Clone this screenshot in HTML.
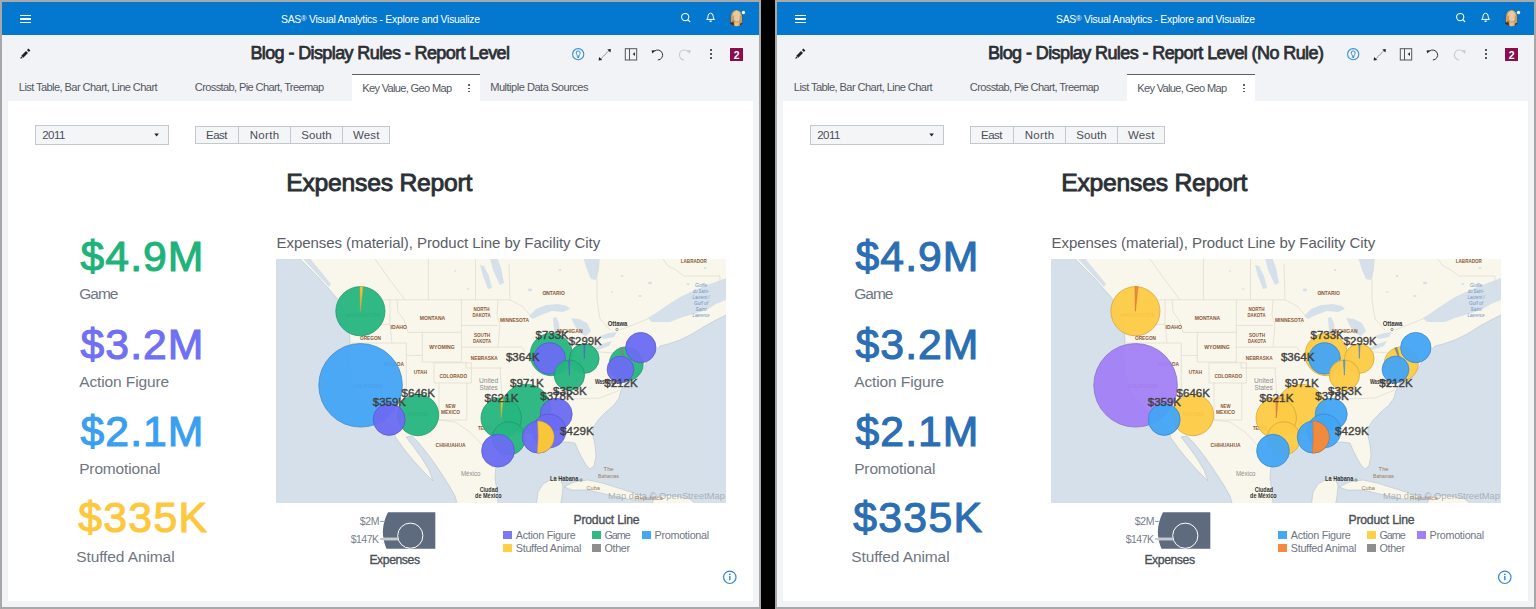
<!DOCTYPE html><html><head><meta charset="utf-8"><style>
html,body{margin:0;padding:0;width:1536px;height:609px;overflow:hidden;background:#a8a8a8}
.r{position:absolute}
.t{position:absolute;white-space:pre;font-family:'Liberation Sans', sans-serif;line-height:normal}
svg{position:absolute;overflow:visible}
</style></head><body>
<div class="r" style="left:761px;top:0;width:14px;height:609px;background:#000"></div>
<div class="r" style="left:2px;top:2px;width:757px;height:32.5px;background:#0478cf"></div>
<div class="r" style="left:2px;top:34.5px;width:757px;height:572.5px;background:#f2f3f6"></div>
<div class="r" style="left:20px;top:14.9px;width:10.5px;height:1.3px;background:#fff"></div>
<div class="r" style="left:20px;top:18.4px;width:10.5px;height:1.3px;background:#fff"></div>
<div class="r" style="left:20px;top:21.8px;width:10.5px;height:1.3px;background:#fff"></div>
<div class="t" style="left:281.00px;top:14.29px;font-size:10.4px;font-weight:400;color:#fff;letter-spacing:-0.255px;">SAS<span style="font-size:7.5px;position:relative;top:-2.6px">&#174;</span> Visual Analytics - Explore and Visualize</div>
<svg style="left:678px;top:10px" width="16" height="16" viewBox="0 0 16 16">
<circle cx="7.2" cy="7" r="3.6" fill="none" stroke="#fff" stroke-width="1.05"/>
<line x1="9.8" y1="9.7" x2="11.8" y2="11.6" stroke="#fff" stroke-width="1.2" stroke-linecap="round"/></svg>
<svg style="left:703px;top:10px" width="16" height="16" viewBox="0 0 16 16">
<path d="M3.6 9.4 Q5.2 8.4 5.0 6.2 Q5.1 3.3 7.6 3.2 Q10.1 3.3 10.2 6.2 Q10.0 8.4 11.6 9.4 Z" fill="none" stroke="#fff" stroke-width="1.0" stroke-linejoin="round"/>
<path d="M6.6 10.8 Q7.6 11.9 8.6 10.8" fill="none" stroke="#fff" stroke-width="1.3"/></svg>
<svg style="left:724px;top:6px" width="26" height="24" viewBox="0 0 26 24">
<defs><clipPath id="avc0"><circle cx="12.4" cy="12.1" r="8.2"/></clipPath></defs>
<circle cx="12.4" cy="12.1" r="8.2" fill="#1a6db5"/>
<g clip-path="url(#avc0)">
<path d="M7.2 19.5 Q6.6 12 7.4 8.2 Q9 4.2 12.6 4.1 Q16.4 4.3 17.6 8.4 Q18.4 12.5 17.6 19.8 Q12.5 22 7.2 19.5Z" fill="#c9a062"/><path d="M8.5 10 Q9.5 5 12.6 4.8 Q15.8 5 16.6 10 Q12.6 8 8.5 10Z" fill="#e6cf9c"/>
<ellipse cx="12.9" cy="11.6" rx="2.9" ry="4.1" fill="#e9c8a4"/>

<path d="M3.5 22 Q4.5 17 8.6 15.8 Q10.5 19 10.5 22Z" fill="#2a2a30"/><path d="M9 14 Q10.2 17 10 20 L8.6 20 Q8.2 16 9 14Z" fill="#5a4330"/>
<path d="M21.5 22 Q20.5 17.5 16.8 16.8 Q15.5 20 15.2 22Z" fill="#26262c"/>
<path d="M10.8 15.8 Q12.8 17.5 14.8 15.8 L14.4 21 L11.2 21Z" fill="#e4bf98"/>
</g>
<circle cx="19.5" cy="6.5" r="1.7" fill="#fff"/></svg>
<svg style="left:18px;top:47px" width="14" height="14" viewBox="0 0 14 14">
<path d="M2.3 11.7 L3.1 9.3 L4.7 10.9 Z" fill="#222"/>
<line x1="4.3" y1="9.7" x2="9.0" y2="5.0" stroke="#222" stroke-width="2.8"/>
<line x1="9.9" y1="4.1" x2="11.4" y2="2.6" stroke="#222" stroke-width="2.8" stroke-linecap="butt"/></svg>
<div class="t" style="left:250.40px;top:42.91px;font-size:18px;font-weight:400;color:#2c2f34;letter-spacing:-0.604px;-webkit-text-stroke:0.75px #2c2f34;">Blog - Display Rules - Report Level</div>
<svg style="left:571px;top:47px" width="15" height="15" viewBox="0 0 15 15">
<circle cx="7.2" cy="7.2" r="5.6" fill="none" stroke="#3a8fd7" stroke-width="1.1"/>
<path d="M5.3 6.3 A1.95 1.95 0 1 1 9.1 6.3 Q8.7 7.5 8.1 8.4 L8.1 9.3 L6.3 9.3 L6.3 8.4 Q5.7 7.5 5.3 6.3 Z" fill="none" stroke="#3a8fd7" stroke-width="1"/>
<rect x="6.3" y="9.6" width="1.8" height="1.4" fill="#3a8fd7"/></svg>
<svg style="left:597px;top:47px" width="16" height="16" viewBox="0 0 16 16">
<line x1="3.8" y1="11.8" x2="12" y2="3.6" stroke="#444" stroke-width="0.8" stroke-dasharray="1.6 0.6"/>
<path d="M1.6 13.4 L2.1 9.9 L5.2 13.0 Z" fill="#222"/>
<path d="M13.9 2.0 L13.4 5.5 L10.3 2.5 Z" fill="#222"/></svg>
<svg style="left:624px;top:48px" width="14" height="14" viewBox="0 0 14 14">
<rect x="1.3" y="0.7" width="11.4" height="11.3" fill="none" stroke="#555" stroke-width="1"/>
<line x1="5.5" y1="0.7" x2="5.5" y2="12" stroke="#555" stroke-width="1"/>
<path d="M11 4.3 L11 7.9 L8.6 6.1 Z" fill="#333"/></svg>
<svg style="left:650px;top:47px" width="16" height="16" viewBox="0 0 16 16">
<path d="M4.3 4.3 A5.0 5.0 0 1 1 7.8 13.0" fill="none" stroke="#333" stroke-width="1.0"/>
<path d="M1.6 3.6 L5.4 3.3 L2.3 6.6 Z" fill="#222"/></svg>
<svg style="left:676px;top:47px" width="16" height="16" viewBox="0 0 16 16">
<path d="M12.0 4.6 A5.0 5.0 0 1 0 8.2 13.0" fill="none" stroke="#c9cbcf" stroke-width="1.1"/>
<path d="M14.8 3.2 L10.4 3.0 L13.9 7.0 Z" fill="#c9cbcf"/></svg>
<div class="r" style="left:709.5px;top:48.9px;width:2.2px;height:2.2px;border-radius:50%;background:#222"></div>
<div class="r" style="left:709.5px;top:53.1px;width:2.2px;height:2.2px;border-radius:50%;background:#222"></div>
<div class="r" style="left:709.5px;top:57.1px;width:2.2px;height:2.2px;border-radius:50%;background:#222"></div>
<div class="r" style="left:730.3px;top:48.1px;width:12.6px;height:12.8px;background:#8b0d4b"></div>
<div class="t" style="left:733.68px;top:49.10px;font-size:10.5px;font-weight:700;color:#fff;letter-spacing:0.000px;">2</div>
<div class="t" style="left:18.80px;top:80.95px;font-size:11.1px;font-weight:400;color:#535861;letter-spacing:-0.589px;">List Table, Bar Chart, Line Chart</div>
<div class="t" style="left:194.80px;top:80.95px;font-size:11.1px;font-weight:400;color:#535861;letter-spacing:-0.639px;">Crosstab, Pie Chart, Treemap</div>
<div class="r" style="left:352px;top:74px;width:127.5px;height:27px;background:#fff;border-top:1.6px solid #5b5f66;box-sizing:border-box"></div>
<div class="t" style="left:362.30px;top:82.25px;font-size:11.1px;font-weight:400;color:#535861;letter-spacing:-0.691px;">Key Value, Geo Map</div>
<div class="r" style="left:468px;top:84.2px;width:1.6px;height:1.6px;border-radius:50%;background:#444"></div>
<div class="r" style="left:468px;top:87.5px;width:1.6px;height:1.6px;border-radius:50%;background:#444"></div>
<div class="r" style="left:468px;top:90.8px;width:1.6px;height:1.6px;border-radius:50%;background:#444"></div>
<div class="t" style="left:490.20px;top:80.75px;font-size:11.1px;font-weight:400;color:#535861;letter-spacing:-0.507px;">Multiple Data Sources</div>
<div class="r" style="left:8px;top:101px;width:744.5px;height:499.5px;background:#fff"></div>
<div class="r" style="left:35px;top:125px;width:134px;height:19.5px;background:#f4f5f7;border:1px solid #c3c7ce;box-sizing:border-box"></div>
<div class="t" style="left:42.30px;top:128.59px;font-size:11.5px;font-weight:400;color:#4a4f58;letter-spacing:-0.578px;">2011</div>
<svg style="left:152.5px;top:131px" width="8" height="8" viewBox="0 0 8 8"><path d="M1.3 2.4 L5.9 2.4 L3.6 5.6 Z" fill="#222"/></svg>
<div class="r" style="left:195.3px;top:126.4px;width:194.5px;height:17.3px;background:#f4f5f7;border:1px solid #c3c7ce;box-sizing:border-box"></div>
<div class="r" style="left:237.7px;top:126.4px;width:1px;height:17.3px;background:#c3c7ce"></div>
<div class="r" style="left:290.1px;top:126.4px;width:1px;height:17.3px;background:#c3c7ce"></div>
<div class="r" style="left:341.9px;top:126.4px;width:1px;height:17.3px;background:#c3c7ce"></div>
<div class="t" style="left:206.05px;top:128.59px;font-size:11.5px;font-weight:400;color:#4a4f58;letter-spacing:-0.505px;">East</div>
<div class="t" style="left:249.65px;top:128.59px;font-size:11.5px;font-weight:400;color:#4a4f58;letter-spacing:0.344px;">North</div>
<div class="t" style="left:301.25px;top:128.59px;font-size:11.5px;font-weight:400;color:#4a4f58;letter-spacing:0.109px;">South</div>
<div class="t" style="left:352.95px;top:128.59px;font-size:11.5px;font-weight:400;color:#4a4f58;letter-spacing:0.167px;">West</div>
<div class="t" style="left:286.30px;top:169.45px;font-size:24.7px;font-weight:400;color:#2b2f36;letter-spacing:-0.242px;-webkit-text-stroke:0.9px #2b2f36;">Expenses Report</div>
<div class="t" style="left:80.60px;top:232.16px;font-size:42.7px;font-weight:400;color:#1fb37b;letter-spacing:1.036px;-webkit-text-stroke:1.1px #1fb37b;">$4.9M</div>
<div class="t" style="left:79.20px;top:285.17px;font-size:15.5px;font-weight:400;color:#6f7682;letter-spacing:-0.973px;">Game</div>
<div class="t" style="left:80.60px;top:320.16px;font-size:42.7px;font-weight:400;color:#7070f3;letter-spacing:1.036px;-webkit-text-stroke:1.1px #7070f3;">$3.2M</div>
<div class="t" style="left:79.20px;top:372.97px;font-size:15.5px;font-weight:400;color:#6f7682;letter-spacing:-0.111px;">Action Figure</div>
<div class="t" style="left:80.60px;top:407.16px;font-size:42.7px;font-weight:400;color:#3a9ff1;letter-spacing:1.036px;-webkit-text-stroke:1.1px #3a9ff1;">$2.1M</div>
<div class="t" style="left:79.20px;top:459.87px;font-size:15.5px;font-weight:400;color:#6f7682;letter-spacing:-0.152px;">Promotional</div>
<div class="t" style="left:78.30px;top:493.36px;font-size:42.7px;font-weight:400;color:#fdc83e;letter-spacing:1.291px;-webkit-text-stroke:1.1px #fdc83e;">$335K</div>
<div class="t" style="left:76.20px;top:547.57px;font-size:15.5px;font-weight:400;color:#6f7682;letter-spacing:-0.098px;">Stuffed Animal</div>
<div class="t" style="left:276.60px;top:233.93px;font-size:15px;font-weight:400;color:#5b6068;letter-spacing:-0.065px;">Expenses (material), Product Line by Facility City</div>
<svg style="left:276px;top:259px" width="450" height="244" viewBox="0 0 450 244"><defs><clipPath id="mc276"><rect width="450" height="244"/></clipPath></defs><g clip-path="url(#mc276)">
<rect width="450" height="244" fill="#d6e0ea"/>
<polygon points="19.0,-5.0 24.0,0.0 34.0,10.0 42.0,18.0 52.0,29.0 60.0,38.0 66.0,46.0 70.0,57.0 73.0,69.0 74.0,81.0 73.0,96.0 74.0,111.0 77.0,126.0 84.0,139.0 94.0,149.0 106.0,159.0 116.0,169.0 120.0,179.0 128.0,190.0 137.0,201.0 146.0,211.0 154.0,219.0 157.0,222.0 153.0,211.0 145.0,198.0 137.0,187.0 130.0,178.0 136.0,177.0 143.0,184.0 151.0,194.0 159.0,205.0 167.0,217.0 174.0,228.0 179.0,237.0 181.0,244.0 182.0,249.0 222.0,249.0 222.0,244.0 221.0,233.0 219.0,219.0 220.0,206.0 222.0,196.0 227.0,188.0 236.0,183.0 249.0,181.0 264.0,183.0 279.0,184.0 292.0,183.0 299.0,184.0 302.0,191.0 306.0,199.0 310.0,206.0 314.0,210.0 318.0,207.0 320.0,197.0 319.0,186.0 317.0,177.0 317.0,169.0 322.0,161.0 330.0,153.0 338.0,146.0 343.0,139.0 345.0,131.0 350.0,123.0 358.0,116.0 367.0,110.0 372.0,101.0 378.0,93.0 384.0,87.0 392.0,85.0 404.0,81.0 416.0,75.0 429.0,67.0 440.0,61.0 450.0,56.0 455.0,54.0 455.0,-5.0" fill="#f9f7ec" stroke="#b9c3cc" stroke-width="0.6"/>
<polygon points="260.0,249.0 262.0,233.0 267.0,225.0 276.0,220.0 284.0,219.0 287.0,227.0 286.0,237.0 284.0,249.0" fill="#f9f7ec" stroke="#b9c3cc" stroke-width="0.6"/>
<polygon points="288.0,228.0 298.0,223.0 312.0,221.0 326.0,224.0 342.0,229.0 358.0,234.0 370.0,238.0 365.0,242.0 346.0,239.0 329.0,235.0 312.0,231.0 296.0,231.0" fill="#f9f7ec" stroke="#b9c3cc" stroke-width="0.6"/>
<polygon points="379.0,238.0 394.0,236.0 414.0,240.0 424.0,249.0 374.0,249.0" fill="#f9f7ec" stroke="#b9c3cc" stroke-width="0.6"/>
<polygon points="372.0,59.0 380.0,54.0 390.0,47.0 404.0,38.0 419.0,31.0 434.0,25.0 450.0,19.0 450.0,41.0 440.0,45.0 432.0,50.0 424.0,53.0 414.0,56.0 404.0,59.0 394.0,63.0 384.0,63.0 376.0,63.0" fill="#d6e0ea"/>
<polygon points="306.0,-5.0 324.0,-5.0 323.0,11.0 320.0,21.0 315.0,20.0 311.0,11.0" fill="#d6e0ea"/>
<polygon points="27.0,-5.0 32.0,-3.0 42.0,9.0 55.0,25.0 53.0,28.0 40.0,14.0 28.0,1.0" fill="#d6e0ea"/>
<polygon points="213.0,-5.0 220.0,-5.0 225.0,9.0 228.0,24.0 224.0,26.0 217.0,11.0" fill="#d6e0ea"/>
<polygon points="204.0,6.0 208.0,7.0 213.0,17.0 216.0,29.0 212.0,30.0 207.0,17.0" fill="#d6e0ea"/>
<polygon points="253.0,57.0 260.0,50.0 270.0,46.0 282.0,45.0 291.0,47.0 294.0,50.0 287.0,53.0 276.0,52.0 265.0,56.0 257.0,60.0" fill="#d6e0ea"/>
<polygon points="277.0,59.0 280.0,58.0 283.0,64.0 284.0,76.0 282.0,85.0 279.0,82.0 278.0,71.0" fill="#d6e0ea"/>
<polygon points="295.0,59.0 303.0,60.0 311.0,64.0 315.0,72.0 310.0,77.0 303.0,74.0 299.0,67.0" fill="#d6e0ea"/>
<polygon points="316.0,90.0 326.0,85.0 336.0,82.0 333.0,87.0 322.0,91.0" fill="#d6e0ea"/>
<polygon points="324.0,77.0 333.0,74.0 341.0,73.0 338.0,78.0 328.0,80.0" fill="#d6e0ea"/>
<ellipse cx="374" cy="24" rx="2.2" ry="1.2" fill="#d6e0ea"/>
<ellipse cx="346" cy="17" rx="1.5" ry="1" fill="#d6e0ea"/>
<ellipse cx="412" cy="25" rx="1.6" ry="1" fill="#d6e0ea"/>
<ellipse cx="179" cy="12" rx="1.2" ry="0.8" fill="#d6e0ea"/>
<ellipse cx="192" cy="30" rx="1.3" ry="0.8" fill="#d6e0ea"/>
<ellipse cx="364" cy="37" rx="1.8" ry="1" fill="#d6e0ea"/>
<ellipse cx="429" cy="9" rx="1.5" ry="0.9" fill="#d6e0ea"/>
<ellipse cx="284" cy="11" rx="1.4" ry="0.9" fill="#d6e0ea"/>
<ellipse cx="336" cy="33" rx="1.4" ry="0.8" fill="#d6e0ea"/>
<ellipse cx="254" cy="31" rx="2.2" ry="1.4" fill="#d6e0ea"/>
<ellipse cx="270" cy="34" rx="1.8" ry="2.4" fill="#d6e0ea"/>
<polyline points="74.0,40.8 234.0,40.8 246.0,47.0 254.0,56.0" fill="none" stroke="#e0d9cb" stroke-width="0.7"/>
<polyline points="99.0,0.0 114.0,21.0 129.0,40.8" fill="none" stroke="#e0d9cb" stroke-width="0.7"/>
<polyline points="152.4,0.0 152.4,40.8" fill="none" stroke="#e0d9cb" stroke-width="0.7"/>
<polyline points="199.5,0.0 199.5,40.8" fill="none" stroke="#e0d9cb" stroke-width="0.7"/>
<polyline points="233.0,5.0 234.0,40.8" fill="none" stroke="#e0d9cb" stroke-width="0.7"/>
<polyline points="321.0,4.0 321.0,41.0 324.0,60.0 334.0,71.0" fill="none" stroke="#e0d9cb" stroke-width="0.7"/>
<polyline points="74.0,65.4 114.0,65.4" fill="none" stroke="#e0d9cb" stroke-width="0.7"/>
<polyline points="114.0,40.8 114.0,65.4 116.0,84.0" fill="none" stroke="#e0d9cb" stroke-width="0.7"/>
<polyline points="121.0,40.8 122.0,53.0 128.0,61.0 132.0,73.3 146.3,73.3 185.4,73.3" fill="none" stroke="#e0d9cb" stroke-width="0.7"/>
<polyline points="185.4,40.8 185.4,103.0 146.3,103.0 146.3,73.3" fill="none" stroke="#e0d9cb" stroke-width="0.7"/>
<polyline points="185.4,66.5 222.0,66.5" fill="none" stroke="#e0d9cb" stroke-width="0.7"/>
<polyline points="185.4,88.2 224.0,88.2" fill="none" stroke="#e0d9cb" stroke-width="0.7"/>
<polyline points="190.0,103.0 190.0,109.0 226.0,109.0" fill="none" stroke="#e0d9cb" stroke-width="0.7"/>
<polyline points="74.0,84.0 130.3,84.0 130.3,131.0" fill="none" stroke="#e0d9cb" stroke-width="0.7"/>
<polyline points="130.3,96.4 146.3,96.4" fill="none" stroke="#e0d9cb" stroke-width="0.7"/>
<polyline points="158.0,103.8 195.4,103.8 195.4,124.0 158.0,124.0 158.0,103.8" fill="none" stroke="#e0d9cb" stroke-width="0.7"/>
<polyline points="163.0,124.0 163.0,161.0 190.8,161.0 190.8,124.0" fill="none" stroke="#e0d9cb" stroke-width="0.7"/>
<polyline points="222.0,41.0 221.0,56.0 224.0,66.0 222.0,88.0" fill="none" stroke="#e0d9cb" stroke-width="0.7"/>
<polyline points="224.0,88.0 246.0,88.0 249.0,93.0" fill="none" stroke="#e0d9cb" stroke-width="0.7"/>
<polyline points="116.0,169.0 144.0,165.0 163.0,161.0 179.0,163.0 194.0,173.0 206.0,186.0 214.0,193.0 222.0,196.0" fill="none" stroke="#e0d9cb" stroke-width="0.7"/>
<polyline points="224.0,109.0 226.0,141.0 239.0,143.0 264.0,141.0" fill="none" stroke="#e0d9cb" stroke-width="0.7"/>
<polyline points="304.0,91.0 324.0,93.0 364.0,96.0" fill="none" stroke="#e0d9cb" stroke-width="0.7"/>
<polyline points="264.0,141.0 324.0,139.0 344.0,131.0" fill="none" stroke="#e0d9cb" stroke-width="0.7"/>
<polyline points="387.0,0.0 392.0,7.0 400.0,11.0 408.0,17.0 444.0,17.0 444.0,31.0" fill="none" stroke="#e0d9cb" stroke-width="0.7"/>
<polyline points="344.0,71.0 374.0,59.0" fill="none" stroke="#e0d9cb" stroke-width="0.7"/>
<text x="94.5" y="81.0" text-anchor="middle" textLength="21" lengthAdjust="spacingAndGlyphs" style="font-family:Liberation Sans;font-weight:700;font-size:5.8px" fill="#8b5836">OREGON</text>
<text x="122.8" y="70.0" text-anchor="middle" textLength="16.4" lengthAdjust="spacingAndGlyphs" style="font-family:Liberation Sans;font-weight:700;font-size:5.8px" fill="#8b5836">IDAHO</text>
<text x="156.5" y="61.0" text-anchor="middle" textLength="25.4" lengthAdjust="spacingAndGlyphs" style="font-family:Liberation Sans;font-weight:700;font-size:5.8px" fill="#8b5836">MONTANA</text>
<text x="205.5" y="52.0" text-anchor="middle" textLength="16" lengthAdjust="spacingAndGlyphs" style="font-family:Liberation Sans;font-weight:700;font-size:5.8px" fill="#8b5836">NORTH</text>
<text x="205.5" y="58.0" text-anchor="middle" textLength="18" lengthAdjust="spacingAndGlyphs" style="font-family:Liberation Sans;font-weight:700;font-size:5.8px" fill="#8b5836">DAKOTA</text>
<text x="206.0" y="78.2" text-anchor="middle" textLength="16" lengthAdjust="spacingAndGlyphs" style="font-family:Liberation Sans;font-weight:700;font-size:5.8px" fill="#8b5836">SOUTH</text>
<text x="206.0" y="84.0" text-anchor="middle" textLength="18" lengthAdjust="spacingAndGlyphs" style="font-family:Liberation Sans;font-weight:700;font-size:5.8px" fill="#8b5836">DAKOTA</text>
<text x="166.0" y="90.0" text-anchor="middle" textLength="25.6" lengthAdjust="spacingAndGlyphs" style="font-family:Liberation Sans;font-weight:700;font-size:5.8px" fill="#8b5836">WYOMING</text>
<text x="208.3" y="101.3" text-anchor="middle" textLength="27" lengthAdjust="spacingAndGlyphs" style="font-family:Liberation Sans;font-weight:700;font-size:5.8px" fill="#8b5836">NEBRASKA</text>
<text x="238.5" y="62.5" text-anchor="middle" textLength="29" lengthAdjust="spacingAndGlyphs" style="font-family:Liberation Sans;font-weight:700;font-size:5.8px" fill="#8b5836">MINNESOTA</text>
<text x="144.4" y="115.0" text-anchor="middle" textLength="13.2" lengthAdjust="spacingAndGlyphs" style="font-family:Liberation Sans;font-weight:700;font-size:5.8px" fill="#8b5836">UTAH</text>
<text x="177.3" y="119.4" text-anchor="middle" textLength="27.8" lengthAdjust="spacingAndGlyphs" style="font-family:Liberation Sans;font-weight:700;font-size:5.8px" fill="#8b5836">COLORADO</text>
<text x="174.5" y="148.5" text-anchor="middle" textLength="10" lengthAdjust="spacingAndGlyphs" style="font-family:Liberation Sans;font-weight:700;font-size:5.8px" fill="#8b5836">NEW</text>
<text x="174.5" y="155.0" text-anchor="middle" textLength="19" lengthAdjust="spacingAndGlyphs" style="font-family:Liberation Sans;font-weight:700;font-size:5.8px" fill="#8b5836">MEXICO</text>
<text x="174.6" y="187.5" text-anchor="middle" textLength="30" lengthAdjust="spacingAndGlyphs" style="font-family:Liberation Sans;font-weight:700;font-size:5.8px" fill="#8b5836">CHIHUAHUA</text>
<text x="277.6" y="35.5" text-anchor="middle" textLength="22.4" lengthAdjust="spacingAndGlyphs" style="font-family:Liberation Sans;font-weight:700;font-size:5.8px" fill="#8b5836">ONTARIO</text>
<text x="417.8" y="3.9" text-anchor="middle" textLength="26" lengthAdjust="spacingAndGlyphs" style="font-family:Liberation Sans;font-weight:700;font-size:5.8px" fill="#8b5836">LABRADOR</text>
<text x="293.8" y="73.5" text-anchor="middle" textLength="25.5" lengthAdjust="spacingAndGlyphs" style="font-family:Liberation Sans;font-weight:700;font-size:5.8px" fill="#8b5836">MICHIGAN</text>
<text x="209.0" y="171.0" text-anchor="middle" textLength="14" lengthAdjust="spacingAndGlyphs" style="font-family:Liberation Sans;font-weight:700;font-size:5.8px" fill="#8b5836">TEXAS</text>
<text x="87.0" y="58.0" text-anchor="middle" textLength="34" lengthAdjust="spacingAndGlyphs" style="font-family:Liberation Sans;font-weight:700;font-size:5.8px" fill="#8b5836">WASHINGTON</text>
<text x="92.0" y="129.0" text-anchor="middle" textLength="30" lengthAdjust="spacingAndGlyphs" style="font-family:Liberation Sans;font-weight:700;font-size:5.8px" fill="#8b5836">CALIFORNIA</text>
<text x="118.0" y="107.0" text-anchor="middle" textLength="20" lengthAdjust="spacingAndGlyphs" style="font-family:Liberation Sans;font-weight:700;font-size:5.8px" fill="#8b5836">NEVADA</text>
<text x="142.0" y="157.0" text-anchor="middle" textLength="22" lengthAdjust="spacingAndGlyphs" style="font-family:Liberation Sans;font-weight:700;font-size:5.8px" fill="#8b5836">ARIZONA</text>
<text x="212.6" y="124.4" text-anchor="middle" textLength="19.3" lengthAdjust="spacingAndGlyphs" style="font-family:Liberation Sans;font-size:6.5px" fill="#8c8c8c">United</text>
<text x="212.6" y="130.6" text-anchor="middle" textLength="18" lengthAdjust="spacingAndGlyphs" style="font-family:Liberation Sans;font-size:6.5px" fill="#8c8c8c">States</text>
<text x="194.7" y="217.3" text-anchor="middle" textLength="19.5" lengthAdjust="spacingAndGlyphs" style="font-family:Liberation Sans;font-size:6.5px" fill="#8c8c8c">México</text>
<text x="332.5" y="125.0" text-anchor="middle" textLength="27" lengthAdjust="spacingAndGlyphs" style="font-family:Liberation Sans;font-weight:700;font-size:6.3px" fill="#333">Washington</text>
<text x="341.5" y="67.1" text-anchor="middle" textLength="19.7" lengthAdjust="spacingAndGlyphs" style="font-family:Liberation Sans;font-weight:700;font-size:6.3px" fill="#333">Ottawa</text>
<text x="212.8" y="232.8" text-anchor="middle" textLength="18.3" lengthAdjust="spacingAndGlyphs" style="font-family:Liberation Sans;font-weight:700;font-size:6.3px" fill="#333">Ciudad</text>
<text x="212.4" y="239.2" text-anchor="middle" textLength="26.7" lengthAdjust="spacingAndGlyphs" style="font-family:Liberation Sans;font-weight:700;font-size:6.3px" fill="#333">de México</text>
<text x="288.2" y="222.1" text-anchor="middle" textLength="28.3" lengthAdjust="spacingAndGlyphs" style="font-family:Liberation Sans;font-weight:700;font-size:6.3px" fill="#333">La Habana</text>
<text x="332.6" y="212.0" text-anchor="middle" textLength="10" lengthAdjust="spacingAndGlyphs" style="font-family:Liberation Sans;font-size:6px" fill="#9a7a5a">The</text>
<text x="332.6" y="219.0" text-anchor="middle" textLength="21" lengthAdjust="spacingAndGlyphs" style="font-family:Liberation Sans;font-size:6px" fill="#9a7a5a">Bahamas</text>
<text x="317.2" y="231.3" text-anchor="middle" textLength="13.6" lengthAdjust="spacingAndGlyphs" style="font-family:Liberation Sans;font-size:6px" fill="#9a7a5a">Cuba</text>
<text x="372.8" y="241.0" text-anchor="middle" textLength="27.7" lengthAdjust="spacingAndGlyphs" style="font-family:Liberation Sans;font-size:6px" fill="#9a7a5a">Republica</text>
<text x="425.0" y="27.5" text-anchor="middle" textLength="12" lengthAdjust="spacingAndGlyphs" style="font-family:Liberation Sans;font-style:italic;font-size:5px" fill="#6f93c4">Golfe</text>
<text x="425.0" y="33.5" text-anchor="middle" textLength="16" lengthAdjust="spacingAndGlyphs" style="font-family:Liberation Sans;font-style:italic;font-size:5px" fill="#6f93c4">du Saint-</text>
<text x="425.0" y="39.5" text-anchor="middle" textLength="17" lengthAdjust="spacingAndGlyphs" style="font-family:Liberation Sans;font-style:italic;font-size:5px" fill="#6f93c4">Laurent /</text>
<text x="425.0" y="45.5" text-anchor="middle" textLength="14" lengthAdjust="spacingAndGlyphs" style="font-family:Liberation Sans;font-style:italic;font-size:5px" fill="#6f93c4">Gulf of</text>
<text x="425.0" y="51.5" text-anchor="middle" textLength="11" lengthAdjust="spacingAndGlyphs" style="font-family:Liberation Sans;font-style:italic;font-size:5px" fill="#6f93c4">Saint</text>
<text x="425.0" y="57.5" text-anchor="middle" textLength="17" lengthAdjust="spacingAndGlyphs" style="font-family:Liberation Sans;font-style:italic;font-size:5px" fill="#6f93c4">Lawrence</text>
<circle cx="341" cy="70.5" r="1.2" fill="none" stroke="#444" stroke-width="0.5"/>
<circle cx="305" cy="221" r="1.2" fill="none" stroke="#444" stroke-width="0.5"/>
<circle cx="84.40" cy="52.20" r="24.6" fill="#26b57f" fill-opacity="0.95" stroke="#1f9468" stroke-width="0.8" stroke-opacity="0.9"/>
<path d="M84.40,52.20 L83.97,27.60 A24.60,24.60 0 0 1 86.97,27.73 Z" fill="#f9c53a" stroke="#cca12f" stroke-width="0.5"/>
<circle cx="84.60" cy="126.30" r="41.8" fill="#43a4f6" fill-opacity="0.95" stroke="#3686c9" stroke-width="0.8" stroke-opacity="0.9"/>
<circle cx="142.00" cy="156.00" r="20.7" fill="#26b57f" fill-opacity="0.95" stroke="#1f9468" stroke-width="0.8" stroke-opacity="0.9"/>
<circle cx="113.20" cy="160.40" r="16.0" fill="#6a6cf2" fill-opacity="0.95" stroke="#5658c6" stroke-width="0.8" stroke-opacity="0.9"/>
<circle cx="275.30" cy="95.50" r="21.2" fill="#26b57f" fill-opacity="0.95" stroke="#1f9468" stroke-width="0.8" stroke-opacity="0.9"/>
<circle cx="273.60" cy="99.40" r="15.8" fill="#6a6cf2" fill-opacity="0.95" stroke="#5658c6" stroke-width="0.8" stroke-opacity="0.9"/>
<circle cx="308.30" cy="99.60" r="14.8" fill="#26b57f" fill-opacity="0.95" stroke="#1f9468" stroke-width="0.8" stroke-opacity="0.9"/>
<path d="M308.30,99.60 L307.78,84.81 A14.80,14.80 0 0 1 309.07,84.82 Z" fill="#6a6cf2" stroke="#5658c6" stroke-width="0.5"/>
<circle cx="293.40" cy="116.20" r="15.2" fill="#26b57f" fill-opacity="0.95" stroke="#1f9468" stroke-width="0.8" stroke-opacity="0.9"/>
<path d="M293.40,116.20 L292.34,101.04 A15.20,15.20 0 0 1 293.93,101.01 Z" fill="#6a6cf2" stroke="#5658c6" stroke-width="0.5"/>
<circle cx="250.00" cy="149.80" r="24.6" fill="#26b57f" fill-opacity="0.95" stroke="#1f9468" stroke-width="0.8" stroke-opacity="0.9"/>
<circle cx="225.20" cy="159.00" r="20.2" fill="#26b57f" fill-opacity="0.95" stroke="#1f9468" stroke-width="0.8" stroke-opacity="0.9"/>
<path d="M225.20,159.00 L224.85,138.80 A20.20,20.20 0 0 1 227.31,138.91 Z" fill="#f9c53a" stroke="#cca12f" stroke-width="0.5"/>
<circle cx="280.20" cy="155.20" r="16.0" fill="#6a6cf2" fill-opacity="0.95" stroke="#5658c6" stroke-width="0.8" stroke-opacity="0.9"/>
<circle cx="232.70" cy="179.40" r="16.6" fill="#26b57f" fill-opacity="0.95" stroke="#1f9468" stroke-width="0.8" stroke-opacity="0.9"/>
<circle cx="222.00" cy="191.70" r="16.4" fill="#6a6cf2" fill-opacity="0.95" stroke="#5658c6" stroke-width="0.8" stroke-opacity="0.9"/>
<circle cx="273.00" cy="172.00" r="16.9" fill="#6a6cf2" fill-opacity="0.95" stroke="#5658c6" stroke-width="0.8" stroke-opacity="0.9"/>
<circle cx="262.20" cy="178.10" r="16.0" fill="#6a6cf2" fill-opacity="0.95" stroke="#5658c6" stroke-width="0.8" stroke-opacity="0.9"/>
<path d="M262.20,178.10 L261.64,162.11 A16.00,16.00 0 1 1 261.36,194.08 Z" fill="#f9c53a" stroke="#cca12f" stroke-width="0.5"/>
<circle cx="350.20" cy="104.90" r="17.0" fill="#26b57f" fill-opacity="0.95" stroke="#1f9468" stroke-width="0.8" stroke-opacity="0.9"/>
<path d="M350.20,104.90 L343.83,89.14 A17.00,17.00 0 0 1 345.80,88.48 Z" fill="#8e8e8e" stroke="#747474" stroke-width="0.5"/>
<circle cx="364.80" cy="88.60" r="15.2" fill="#6a6cf2" fill-opacity="0.95" stroke="#5658c6" stroke-width="0.8" stroke-opacity="0.9"/>
<circle cx="344.50" cy="110.50" r="13.4" fill="#6a6cf2" fill-opacity="0.95" stroke="#5658c6" stroke-width="0.8" stroke-opacity="0.9"/>
<text x="259.5" y="79.7" textLength="33.2" lengthAdjust="spacingAndGlyphs" style="font-family:Liberation Sans;font-size:10.4px" fill="#3a3a3a" fill-opacity="0.88" stroke="#3a3a3a" stroke-width="0.45" stroke-opacity="0.88">$733K</text>
<text x="292.8" y="85.9" textLength="32.9" lengthAdjust="spacingAndGlyphs" style="font-family:Liberation Sans;font-size:10.4px" fill="#3a3a3a" fill-opacity="0.88" stroke="#3a3a3a" stroke-width="0.45" stroke-opacity="0.88">$299K</text>
<text x="229.9" y="101.5" textLength="33.6" lengthAdjust="spacingAndGlyphs" style="font-family:Liberation Sans;font-size:10.4px" fill="#3a3a3a" fill-opacity="0.88" stroke="#3a3a3a" stroke-width="0.45" stroke-opacity="0.88">$364K</text>
<text x="234.0" y="127.7" textLength="33.7" lengthAdjust="spacingAndGlyphs" style="font-family:Liberation Sans;font-size:10.4px" fill="#3a3a3a" fill-opacity="0.88" stroke="#3a3a3a" stroke-width="0.45" stroke-opacity="0.88">$971K</text>
<text x="277.1" y="135.6" textLength="33.7" lengthAdjust="spacingAndGlyphs" style="font-family:Liberation Sans;font-size:10.4px" fill="#3a3a3a" fill-opacity="0.88" stroke="#3a3a3a" stroke-width="0.45" stroke-opacity="0.88">$353K</text>
<text x="264.3" y="141.0" textLength="33.3" lengthAdjust="spacingAndGlyphs" style="font-family:Liberation Sans;font-size:10.4px" fill="#3a3a3a" fill-opacity="0.88" stroke="#3a3a3a" stroke-width="0.45" stroke-opacity="0.88">$378K</text>
<text x="208.5" y="143.0" textLength="34" lengthAdjust="spacingAndGlyphs" style="font-family:Liberation Sans;font-size:10.4px" fill="#3a3a3a" fill-opacity="0.88" stroke="#3a3a3a" stroke-width="0.45" stroke-opacity="0.88">$621K</text>
<text x="284.1" y="176.4" textLength="33.6" lengthAdjust="spacingAndGlyphs" style="font-family:Liberation Sans;font-size:10.4px" fill="#3a3a3a" fill-opacity="0.88" stroke="#3a3a3a" stroke-width="0.45" stroke-opacity="0.88">$429K</text>
<text x="328.3" y="128.4" textLength="33.3" lengthAdjust="spacingAndGlyphs" style="font-family:Liberation Sans;font-size:10.4px" fill="#3a3a3a" fill-opacity="0.88" stroke="#3a3a3a" stroke-width="0.45" stroke-opacity="0.88">$212K</text>
<text x="125.6" y="138.4" textLength="33.4" lengthAdjust="spacingAndGlyphs" style="font-family:Liberation Sans;font-size:10.4px" fill="#3a3a3a" fill-opacity="0.88" stroke="#3a3a3a" stroke-width="0.45" stroke-opacity="0.88">$646K</text>
<text x="96.8" y="147.0" textLength="33.2" lengthAdjust="spacingAndGlyphs" style="font-family:Liberation Sans;font-size:10.4px" fill="#3a3a3a" fill-opacity="0.88" stroke="#3a3a3a" stroke-width="0.45" stroke-opacity="0.88">$359K</text>
<text x="449" y="239.8" text-anchor="end" textLength="117" lengthAdjust="spacingAndGlyphs" style="font-family:Liberation Sans;font-size:9.5px" fill="#9aa0a6" fill-opacity="0.8">Map data &#169; OpenStreetMap</text>
</g></svg>
<svg style="left:340px;top:505px" width="110" height="60" viewBox="0 0 110 60">
<path d="M48 7.2 L95.3 7.2 L95.3 43.7 L46.5 43.7 Q38.5 25.5 48 7.2 Z" fill="#5e6a7d"/>
<circle cx="70.3" cy="30.7" r="12.6" fill="none" stroke="#fff" stroke-width="1"/>
<line x1="40.2" y1="16.4" x2="43.9" y2="16.4" stroke="#8a93a0" stroke-width="1"/>
<line x1="40.2" y1="34" x2="57.8" y2="34" stroke="#fff" stroke-width="2.6"/>
<line x1="40.2" y1="34" x2="57.8" y2="34" stroke="#8a93a0" stroke-width="1"/>
</svg>
<div class="t" style="left:359.80px;top:515.20px;font-size:10.5px;font-weight:400;color:#78808c;letter-spacing:-0.319px;">$2M</div>
<div class="t" style="left:350.70px;top:532.70px;font-size:10.5px;font-weight:400;color:#78808c;letter-spacing:-0.519px;">$147K</div>
<div class="t" style="left:369.40px;top:552.76px;font-size:12.2px;font-weight:400;color:#4b4f56;letter-spacing:-0.419px;-webkit-text-stroke:0.35px #4b4f56;">Expenses</div>
<div class="t" style="left:573.60px;top:512.96px;font-size:12.2px;font-weight:400;color:#4b4f56;letter-spacing:-0.231px;-webkit-text-stroke:0.35px #4b4f56;">Product Line</div>
<div class="r" style="left:503.3px;top:530.6px;width:8.6px;height:8px;background:#7b78f5"></div>
<div class="t" style="left:515.80px;top:528.73px;font-size:10.8px;font-weight:400;color:#6f7684;letter-spacing:-0.310px;">Action Figure</div>
<div class="r" style="left:592px;top:530.6px;width:8.6px;height:8px;background:#33b783"></div>
<div class="t" style="left:604.50px;top:528.73px;font-size:10.8px;font-weight:400;color:#6f7684;letter-spacing:-1.035px;">Game</div>
<div class="r" style="left:642px;top:530.6px;width:8.6px;height:8px;background:#45a6f5"></div>
<div class="t" style="left:654.50px;top:528.73px;font-size:10.8px;font-weight:400;color:#6f7684;letter-spacing:-0.292px;">Promotional</div>
<div class="r" style="left:503.3px;top:543.9px;width:8.6px;height:8px;background:#fdd048"></div>
<div class="t" style="left:515.80px;top:542.03px;font-size:10.8px;font-weight:400;color:#6f7684;letter-spacing:-0.295px;">Stuffed Animal</div>
<div class="r" style="left:592px;top:543.9px;width:8.6px;height:8px;background:#8e8e8e"></div>
<div class="t" style="left:604.50px;top:542.03px;font-size:10.8px;font-weight:400;color:#6f7684;letter-spacing:-0.379px;">Other</div>
<svg style="left:721px;top:569px" width="18" height="18" viewBox="0 0 18 18">
<circle cx="8.8" cy="8.3" r="6.2" fill="none" stroke="#2f86d4" stroke-width="1.2"/>
<rect x="8.1" y="7.0" width="1.4" height="4.2" fill="#2f86d4"/><circle cx="8.8" cy="5.3" r="0.85" fill="#2f86d4"/></svg>
<div class="r" style="left:777px;top:2px;width:757px;height:32.5px;background:#0478cf"></div>
<div class="r" style="left:777px;top:34.5px;width:757px;height:572.5px;background:#f2f3f6"></div>
<div class="r" style="left:795px;top:14.9px;width:10.5px;height:1.3px;background:#fff"></div>
<div class="r" style="left:795px;top:18.4px;width:10.5px;height:1.3px;background:#fff"></div>
<div class="r" style="left:795px;top:21.8px;width:10.5px;height:1.3px;background:#fff"></div>
<div class="t" style="left:1056.00px;top:14.29px;font-size:10.4px;font-weight:400;color:#fff;letter-spacing:-0.255px;">SAS<span style="font-size:7.5px;position:relative;top:-2.6px">&#174;</span> Visual Analytics - Explore and Visualize</div>
<svg style="left:1453px;top:10px" width="16" height="16" viewBox="0 0 16 16">
<circle cx="7.2" cy="7" r="3.6" fill="none" stroke="#fff" stroke-width="1.05"/>
<line x1="9.8" y1="9.7" x2="11.8" y2="11.6" stroke="#fff" stroke-width="1.2" stroke-linecap="round"/></svg>
<svg style="left:1478px;top:10px" width="16" height="16" viewBox="0 0 16 16">
<path d="M3.6 9.4 Q5.2 8.4 5.0 6.2 Q5.1 3.3 7.6 3.2 Q10.1 3.3 10.2 6.2 Q10.0 8.4 11.6 9.4 Z" fill="none" stroke="#fff" stroke-width="1.0" stroke-linejoin="round"/>
<path d="M6.6 10.8 Q7.6 11.9 8.6 10.8" fill="none" stroke="#fff" stroke-width="1.3"/></svg>
<svg style="left:1499px;top:6px" width="26" height="24" viewBox="0 0 26 24">
<defs><clipPath id="avc775"><circle cx="12.4" cy="12.1" r="8.2"/></clipPath></defs>
<circle cx="12.4" cy="12.1" r="8.2" fill="#1a6db5"/>
<g clip-path="url(#avc775)">
<path d="M7.2 19.5 Q6.6 12 7.4 8.2 Q9 4.2 12.6 4.1 Q16.4 4.3 17.6 8.4 Q18.4 12.5 17.6 19.8 Q12.5 22 7.2 19.5Z" fill="#c9a062"/><path d="M8.5 10 Q9.5 5 12.6 4.8 Q15.8 5 16.6 10 Q12.6 8 8.5 10Z" fill="#e6cf9c"/>
<ellipse cx="12.9" cy="11.6" rx="2.9" ry="4.1" fill="#e9c8a4"/>

<path d="M3.5 22 Q4.5 17 8.6 15.8 Q10.5 19 10.5 22Z" fill="#2a2a30"/><path d="M9 14 Q10.2 17 10 20 L8.6 20 Q8.2 16 9 14Z" fill="#5a4330"/>
<path d="M21.5 22 Q20.5 17.5 16.8 16.8 Q15.5 20 15.2 22Z" fill="#26262c"/>
<path d="M10.8 15.8 Q12.8 17.5 14.8 15.8 L14.4 21 L11.2 21Z" fill="#e4bf98"/>
</g>
<circle cx="19.5" cy="6.5" r="1.7" fill="#fff"/></svg>
<svg style="left:793px;top:47px" width="14" height="14" viewBox="0 0 14 14">
<path d="M2.3 11.7 L3.1 9.3 L4.7 10.9 Z" fill="#222"/>
<line x1="4.3" y1="9.7" x2="9.0" y2="5.0" stroke="#222" stroke-width="2.8"/>
<line x1="9.9" y1="4.1" x2="11.4" y2="2.6" stroke="#222" stroke-width="2.8" stroke-linecap="butt"/></svg>
<div class="t" style="left:987.90px;top:42.91px;font-size:18px;font-weight:400;color:#2c2f34;letter-spacing:-0.594px;-webkit-text-stroke:0.75px #2c2f34;">Blog - Display Rules - Report Level (No Rule)</div>
<svg style="left:1346px;top:47px" width="15" height="15" viewBox="0 0 15 15">
<circle cx="7.2" cy="7.2" r="5.6" fill="none" stroke="#3a8fd7" stroke-width="1.1"/>
<path d="M5.3 6.3 A1.95 1.95 0 1 1 9.1 6.3 Q8.7 7.5 8.1 8.4 L8.1 9.3 L6.3 9.3 L6.3 8.4 Q5.7 7.5 5.3 6.3 Z" fill="none" stroke="#3a8fd7" stroke-width="1"/>
<rect x="6.3" y="9.6" width="1.8" height="1.4" fill="#3a8fd7"/></svg>
<svg style="left:1372px;top:47px" width="16" height="16" viewBox="0 0 16 16">
<line x1="3.8" y1="11.8" x2="12" y2="3.6" stroke="#444" stroke-width="0.8" stroke-dasharray="1.6 0.6"/>
<path d="M1.6 13.4 L2.1 9.9 L5.2 13.0 Z" fill="#222"/>
<path d="M13.9 2.0 L13.4 5.5 L10.3 2.5 Z" fill="#222"/></svg>
<svg style="left:1399px;top:48px" width="14" height="14" viewBox="0 0 14 14">
<rect x="1.3" y="0.7" width="11.4" height="11.3" fill="none" stroke="#555" stroke-width="1"/>
<line x1="5.5" y1="0.7" x2="5.5" y2="12" stroke="#555" stroke-width="1"/>
<path d="M11 4.3 L11 7.9 L8.6 6.1 Z" fill="#333"/></svg>
<svg style="left:1425px;top:47px" width="16" height="16" viewBox="0 0 16 16">
<path d="M4.3 4.3 A5.0 5.0 0 1 1 7.8 13.0" fill="none" stroke="#333" stroke-width="1.0"/>
<path d="M1.6 3.6 L5.4 3.3 L2.3 6.6 Z" fill="#222"/></svg>
<svg style="left:1451px;top:47px" width="16" height="16" viewBox="0 0 16 16">
<path d="M12.0 4.6 A5.0 5.0 0 1 0 8.2 13.0" fill="none" stroke="#c9cbcf" stroke-width="1.1"/>
<path d="M14.8 3.2 L10.4 3.0 L13.9 7.0 Z" fill="#c9cbcf"/></svg>
<div class="r" style="left:1484.5px;top:48.9px;width:2.2px;height:2.2px;border-radius:50%;background:#222"></div>
<div class="r" style="left:1484.5px;top:53.1px;width:2.2px;height:2.2px;border-radius:50%;background:#222"></div>
<div class="r" style="left:1484.5px;top:57.1px;width:2.2px;height:2.2px;border-radius:50%;background:#222"></div>
<div class="r" style="left:1505.3px;top:48.1px;width:12.6px;height:12.8px;background:#8b0d4b"></div>
<div class="t" style="left:1508.68px;top:49.10px;font-size:10.5px;font-weight:700;color:#fff;letter-spacing:0.000px;">2</div>
<div class="t" style="left:793.80px;top:80.95px;font-size:11.1px;font-weight:400;color:#535861;letter-spacing:-0.589px;">List Table, Bar Chart, Line Chart</div>
<div class="t" style="left:969.80px;top:80.95px;font-size:11.1px;font-weight:400;color:#535861;letter-spacing:-0.639px;">Crosstab, Pie Chart, Treemap</div>
<div class="r" style="left:1127px;top:74px;width:127.5px;height:27px;background:#fff;border-top:1.6px solid #5b5f66;box-sizing:border-box"></div>
<div class="t" style="left:1137.30px;top:82.25px;font-size:11.1px;font-weight:400;color:#535861;letter-spacing:-0.691px;">Key Value, Geo Map</div>
<div class="r" style="left:1243px;top:84.2px;width:1.6px;height:1.6px;border-radius:50%;background:#444"></div>
<div class="r" style="left:1243px;top:87.5px;width:1.6px;height:1.6px;border-radius:50%;background:#444"></div>
<div class="r" style="left:1243px;top:90.8px;width:1.6px;height:1.6px;border-radius:50%;background:#444"></div>
<div class="r" style="left:783px;top:101px;width:744.5px;height:499.5px;background:#fff"></div>
<div class="r" style="left:810px;top:125px;width:134px;height:19.5px;background:#f4f5f7;border:1px solid #c3c7ce;box-sizing:border-box"></div>
<div class="t" style="left:817.30px;top:128.59px;font-size:11.5px;font-weight:400;color:#4a4f58;letter-spacing:-0.578px;">2011</div>
<svg style="left:927.5px;top:131px" width="8" height="8" viewBox="0 0 8 8"><path d="M1.3 2.4 L5.9 2.4 L3.6 5.6 Z" fill="#222"/></svg>
<div class="r" style="left:970.3px;top:126.4px;width:194.5px;height:17.3px;background:#f4f5f7;border:1px solid #c3c7ce;box-sizing:border-box"></div>
<div class="r" style="left:1012.7px;top:126.4px;width:1px;height:17.3px;background:#c3c7ce"></div>
<div class="r" style="left:1065.1px;top:126.4px;width:1px;height:17.3px;background:#c3c7ce"></div>
<div class="r" style="left:1116.9px;top:126.4px;width:1px;height:17.3px;background:#c3c7ce"></div>
<div class="t" style="left:981.05px;top:128.59px;font-size:11.5px;font-weight:400;color:#4a4f58;letter-spacing:-0.505px;">East</div>
<div class="t" style="left:1024.65px;top:128.59px;font-size:11.5px;font-weight:400;color:#4a4f58;letter-spacing:0.344px;">North</div>
<div class="t" style="left:1076.25px;top:128.59px;font-size:11.5px;font-weight:400;color:#4a4f58;letter-spacing:0.109px;">South</div>
<div class="t" style="left:1127.95px;top:128.59px;font-size:11.5px;font-weight:400;color:#4a4f58;letter-spacing:0.167px;">West</div>
<div class="t" style="left:1061.30px;top:169.45px;font-size:24.7px;font-weight:400;color:#2b2f36;letter-spacing:-0.242px;-webkit-text-stroke:0.9px #2b2f36;">Expenses Report</div>
<div class="t" style="left:855.60px;top:232.16px;font-size:42.7px;font-weight:400;color:#2b6eb3;letter-spacing:1.036px;-webkit-text-stroke:1.1px #2b6eb3;">$4.9M</div>
<div class="t" style="left:854.20px;top:285.17px;font-size:15.5px;font-weight:400;color:#6f7682;letter-spacing:-0.973px;">Game</div>
<div class="t" style="left:855.60px;top:320.16px;font-size:42.7px;font-weight:400;color:#2b6eb3;letter-spacing:1.036px;-webkit-text-stroke:1.1px #2b6eb3;">$3.2M</div>
<div class="t" style="left:854.20px;top:372.97px;font-size:15.5px;font-weight:400;color:#6f7682;letter-spacing:-0.111px;">Action Figure</div>
<div class="t" style="left:855.60px;top:407.16px;font-size:42.7px;font-weight:400;color:#2b6eb3;letter-spacing:1.036px;-webkit-text-stroke:1.1px #2b6eb3;">$2.1M</div>
<div class="t" style="left:854.20px;top:459.87px;font-size:15.5px;font-weight:400;color:#6f7682;letter-spacing:-0.152px;">Promotional</div>
<div class="t" style="left:853.30px;top:493.36px;font-size:42.7px;font-weight:400;color:#2b6eb3;letter-spacing:1.291px;-webkit-text-stroke:1.1px #2b6eb3;">$335K</div>
<div class="t" style="left:851.20px;top:547.57px;font-size:15.5px;font-weight:400;color:#6f7682;letter-spacing:-0.098px;">Stuffed Animal</div>
<div class="t" style="left:1051.60px;top:233.93px;font-size:15px;font-weight:400;color:#5b6068;letter-spacing:-0.065px;">Expenses (material), Product Line by Facility City</div>
<svg style="left:1051px;top:259px" width="450" height="244" viewBox="0 0 450 244"><defs><clipPath id="mc1051"><rect width="450" height="244"/></clipPath></defs><g clip-path="url(#mc1051)">
<rect width="450" height="244" fill="#d6e0ea"/>
<polygon points="19.0,-5.0 24.0,0.0 34.0,10.0 42.0,18.0 52.0,29.0 60.0,38.0 66.0,46.0 70.0,57.0 73.0,69.0 74.0,81.0 73.0,96.0 74.0,111.0 77.0,126.0 84.0,139.0 94.0,149.0 106.0,159.0 116.0,169.0 120.0,179.0 128.0,190.0 137.0,201.0 146.0,211.0 154.0,219.0 157.0,222.0 153.0,211.0 145.0,198.0 137.0,187.0 130.0,178.0 136.0,177.0 143.0,184.0 151.0,194.0 159.0,205.0 167.0,217.0 174.0,228.0 179.0,237.0 181.0,244.0 182.0,249.0 222.0,249.0 222.0,244.0 221.0,233.0 219.0,219.0 220.0,206.0 222.0,196.0 227.0,188.0 236.0,183.0 249.0,181.0 264.0,183.0 279.0,184.0 292.0,183.0 299.0,184.0 302.0,191.0 306.0,199.0 310.0,206.0 314.0,210.0 318.0,207.0 320.0,197.0 319.0,186.0 317.0,177.0 317.0,169.0 322.0,161.0 330.0,153.0 338.0,146.0 343.0,139.0 345.0,131.0 350.0,123.0 358.0,116.0 367.0,110.0 372.0,101.0 378.0,93.0 384.0,87.0 392.0,85.0 404.0,81.0 416.0,75.0 429.0,67.0 440.0,61.0 450.0,56.0 455.0,54.0 455.0,-5.0" fill="#f9f7ec" stroke="#b9c3cc" stroke-width="0.6"/>
<polygon points="260.0,249.0 262.0,233.0 267.0,225.0 276.0,220.0 284.0,219.0 287.0,227.0 286.0,237.0 284.0,249.0" fill="#f9f7ec" stroke="#b9c3cc" stroke-width="0.6"/>
<polygon points="288.0,228.0 298.0,223.0 312.0,221.0 326.0,224.0 342.0,229.0 358.0,234.0 370.0,238.0 365.0,242.0 346.0,239.0 329.0,235.0 312.0,231.0 296.0,231.0" fill="#f9f7ec" stroke="#b9c3cc" stroke-width="0.6"/>
<polygon points="379.0,238.0 394.0,236.0 414.0,240.0 424.0,249.0 374.0,249.0" fill="#f9f7ec" stroke="#b9c3cc" stroke-width="0.6"/>
<polygon points="372.0,59.0 380.0,54.0 390.0,47.0 404.0,38.0 419.0,31.0 434.0,25.0 450.0,19.0 450.0,41.0 440.0,45.0 432.0,50.0 424.0,53.0 414.0,56.0 404.0,59.0 394.0,63.0 384.0,63.0 376.0,63.0" fill="#d6e0ea"/>
<polygon points="306.0,-5.0 324.0,-5.0 323.0,11.0 320.0,21.0 315.0,20.0 311.0,11.0" fill="#d6e0ea"/>
<polygon points="27.0,-5.0 32.0,-3.0 42.0,9.0 55.0,25.0 53.0,28.0 40.0,14.0 28.0,1.0" fill="#d6e0ea"/>
<polygon points="213.0,-5.0 220.0,-5.0 225.0,9.0 228.0,24.0 224.0,26.0 217.0,11.0" fill="#d6e0ea"/>
<polygon points="204.0,6.0 208.0,7.0 213.0,17.0 216.0,29.0 212.0,30.0 207.0,17.0" fill="#d6e0ea"/>
<polygon points="253.0,57.0 260.0,50.0 270.0,46.0 282.0,45.0 291.0,47.0 294.0,50.0 287.0,53.0 276.0,52.0 265.0,56.0 257.0,60.0" fill="#d6e0ea"/>
<polygon points="277.0,59.0 280.0,58.0 283.0,64.0 284.0,76.0 282.0,85.0 279.0,82.0 278.0,71.0" fill="#d6e0ea"/>
<polygon points="295.0,59.0 303.0,60.0 311.0,64.0 315.0,72.0 310.0,77.0 303.0,74.0 299.0,67.0" fill="#d6e0ea"/>
<polygon points="316.0,90.0 326.0,85.0 336.0,82.0 333.0,87.0 322.0,91.0" fill="#d6e0ea"/>
<polygon points="324.0,77.0 333.0,74.0 341.0,73.0 338.0,78.0 328.0,80.0" fill="#d6e0ea"/>
<ellipse cx="374" cy="24" rx="2.2" ry="1.2" fill="#d6e0ea"/>
<ellipse cx="346" cy="17" rx="1.5" ry="1" fill="#d6e0ea"/>
<ellipse cx="412" cy="25" rx="1.6" ry="1" fill="#d6e0ea"/>
<ellipse cx="179" cy="12" rx="1.2" ry="0.8" fill="#d6e0ea"/>
<ellipse cx="192" cy="30" rx="1.3" ry="0.8" fill="#d6e0ea"/>
<ellipse cx="364" cy="37" rx="1.8" ry="1" fill="#d6e0ea"/>
<ellipse cx="429" cy="9" rx="1.5" ry="0.9" fill="#d6e0ea"/>
<ellipse cx="284" cy="11" rx="1.4" ry="0.9" fill="#d6e0ea"/>
<ellipse cx="336" cy="33" rx="1.4" ry="0.8" fill="#d6e0ea"/>
<ellipse cx="254" cy="31" rx="2.2" ry="1.4" fill="#d6e0ea"/>
<ellipse cx="270" cy="34" rx="1.8" ry="2.4" fill="#d6e0ea"/>
<polyline points="74.0,40.8 234.0,40.8 246.0,47.0 254.0,56.0" fill="none" stroke="#e0d9cb" stroke-width="0.7"/>
<polyline points="99.0,0.0 114.0,21.0 129.0,40.8" fill="none" stroke="#e0d9cb" stroke-width="0.7"/>
<polyline points="152.4,0.0 152.4,40.8" fill="none" stroke="#e0d9cb" stroke-width="0.7"/>
<polyline points="199.5,0.0 199.5,40.8" fill="none" stroke="#e0d9cb" stroke-width="0.7"/>
<polyline points="233.0,5.0 234.0,40.8" fill="none" stroke="#e0d9cb" stroke-width="0.7"/>
<polyline points="321.0,4.0 321.0,41.0 324.0,60.0 334.0,71.0" fill="none" stroke="#e0d9cb" stroke-width="0.7"/>
<polyline points="74.0,65.4 114.0,65.4" fill="none" stroke="#e0d9cb" stroke-width="0.7"/>
<polyline points="114.0,40.8 114.0,65.4 116.0,84.0" fill="none" stroke="#e0d9cb" stroke-width="0.7"/>
<polyline points="121.0,40.8 122.0,53.0 128.0,61.0 132.0,73.3 146.3,73.3 185.4,73.3" fill="none" stroke="#e0d9cb" stroke-width="0.7"/>
<polyline points="185.4,40.8 185.4,103.0 146.3,103.0 146.3,73.3" fill="none" stroke="#e0d9cb" stroke-width="0.7"/>
<polyline points="185.4,66.5 222.0,66.5" fill="none" stroke="#e0d9cb" stroke-width="0.7"/>
<polyline points="185.4,88.2 224.0,88.2" fill="none" stroke="#e0d9cb" stroke-width="0.7"/>
<polyline points="190.0,103.0 190.0,109.0 226.0,109.0" fill="none" stroke="#e0d9cb" stroke-width="0.7"/>
<polyline points="74.0,84.0 130.3,84.0 130.3,131.0" fill="none" stroke="#e0d9cb" stroke-width="0.7"/>
<polyline points="130.3,96.4 146.3,96.4" fill="none" stroke="#e0d9cb" stroke-width="0.7"/>
<polyline points="158.0,103.8 195.4,103.8 195.4,124.0 158.0,124.0 158.0,103.8" fill="none" stroke="#e0d9cb" stroke-width="0.7"/>
<polyline points="163.0,124.0 163.0,161.0 190.8,161.0 190.8,124.0" fill="none" stroke="#e0d9cb" stroke-width="0.7"/>
<polyline points="222.0,41.0 221.0,56.0 224.0,66.0 222.0,88.0" fill="none" stroke="#e0d9cb" stroke-width="0.7"/>
<polyline points="224.0,88.0 246.0,88.0 249.0,93.0" fill="none" stroke="#e0d9cb" stroke-width="0.7"/>
<polyline points="116.0,169.0 144.0,165.0 163.0,161.0 179.0,163.0 194.0,173.0 206.0,186.0 214.0,193.0 222.0,196.0" fill="none" stroke="#e0d9cb" stroke-width="0.7"/>
<polyline points="224.0,109.0 226.0,141.0 239.0,143.0 264.0,141.0" fill="none" stroke="#e0d9cb" stroke-width="0.7"/>
<polyline points="304.0,91.0 324.0,93.0 364.0,96.0" fill="none" stroke="#e0d9cb" stroke-width="0.7"/>
<polyline points="264.0,141.0 324.0,139.0 344.0,131.0" fill="none" stroke="#e0d9cb" stroke-width="0.7"/>
<polyline points="387.0,0.0 392.0,7.0 400.0,11.0 408.0,17.0 444.0,17.0 444.0,31.0" fill="none" stroke="#e0d9cb" stroke-width="0.7"/>
<polyline points="344.0,71.0 374.0,59.0" fill="none" stroke="#e0d9cb" stroke-width="0.7"/>
<text x="94.5" y="81.0" text-anchor="middle" textLength="21" lengthAdjust="spacingAndGlyphs" style="font-family:Liberation Sans;font-weight:700;font-size:5.8px" fill="#8b5836">OREGON</text>
<text x="122.8" y="70.0" text-anchor="middle" textLength="16.4" lengthAdjust="spacingAndGlyphs" style="font-family:Liberation Sans;font-weight:700;font-size:5.8px" fill="#8b5836">IDAHO</text>
<text x="156.5" y="61.0" text-anchor="middle" textLength="25.4" lengthAdjust="spacingAndGlyphs" style="font-family:Liberation Sans;font-weight:700;font-size:5.8px" fill="#8b5836">MONTANA</text>
<text x="205.5" y="52.0" text-anchor="middle" textLength="16" lengthAdjust="spacingAndGlyphs" style="font-family:Liberation Sans;font-weight:700;font-size:5.8px" fill="#8b5836">NORTH</text>
<text x="205.5" y="58.0" text-anchor="middle" textLength="18" lengthAdjust="spacingAndGlyphs" style="font-family:Liberation Sans;font-weight:700;font-size:5.8px" fill="#8b5836">DAKOTA</text>
<text x="206.0" y="78.2" text-anchor="middle" textLength="16" lengthAdjust="spacingAndGlyphs" style="font-family:Liberation Sans;font-weight:700;font-size:5.8px" fill="#8b5836">SOUTH</text>
<text x="206.0" y="84.0" text-anchor="middle" textLength="18" lengthAdjust="spacingAndGlyphs" style="font-family:Liberation Sans;font-weight:700;font-size:5.8px" fill="#8b5836">DAKOTA</text>
<text x="166.0" y="90.0" text-anchor="middle" textLength="25.6" lengthAdjust="spacingAndGlyphs" style="font-family:Liberation Sans;font-weight:700;font-size:5.8px" fill="#8b5836">WYOMING</text>
<text x="208.3" y="101.3" text-anchor="middle" textLength="27" lengthAdjust="spacingAndGlyphs" style="font-family:Liberation Sans;font-weight:700;font-size:5.8px" fill="#8b5836">NEBRASKA</text>
<text x="238.5" y="62.5" text-anchor="middle" textLength="29" lengthAdjust="spacingAndGlyphs" style="font-family:Liberation Sans;font-weight:700;font-size:5.8px" fill="#8b5836">MINNESOTA</text>
<text x="144.4" y="115.0" text-anchor="middle" textLength="13.2" lengthAdjust="spacingAndGlyphs" style="font-family:Liberation Sans;font-weight:700;font-size:5.8px" fill="#8b5836">UTAH</text>
<text x="177.3" y="119.4" text-anchor="middle" textLength="27.8" lengthAdjust="spacingAndGlyphs" style="font-family:Liberation Sans;font-weight:700;font-size:5.8px" fill="#8b5836">COLORADO</text>
<text x="174.5" y="148.5" text-anchor="middle" textLength="10" lengthAdjust="spacingAndGlyphs" style="font-family:Liberation Sans;font-weight:700;font-size:5.8px" fill="#8b5836">NEW</text>
<text x="174.5" y="155.0" text-anchor="middle" textLength="19" lengthAdjust="spacingAndGlyphs" style="font-family:Liberation Sans;font-weight:700;font-size:5.8px" fill="#8b5836">MEXICO</text>
<text x="174.6" y="187.5" text-anchor="middle" textLength="30" lengthAdjust="spacingAndGlyphs" style="font-family:Liberation Sans;font-weight:700;font-size:5.8px" fill="#8b5836">CHIHUAHUA</text>
<text x="277.6" y="35.5" text-anchor="middle" textLength="22.4" lengthAdjust="spacingAndGlyphs" style="font-family:Liberation Sans;font-weight:700;font-size:5.8px" fill="#8b5836">ONTARIO</text>
<text x="417.8" y="3.9" text-anchor="middle" textLength="26" lengthAdjust="spacingAndGlyphs" style="font-family:Liberation Sans;font-weight:700;font-size:5.8px" fill="#8b5836">LABRADOR</text>
<text x="293.8" y="73.5" text-anchor="middle" textLength="25.5" lengthAdjust="spacingAndGlyphs" style="font-family:Liberation Sans;font-weight:700;font-size:5.8px" fill="#8b5836">MICHIGAN</text>
<text x="209.0" y="171.0" text-anchor="middle" textLength="14" lengthAdjust="spacingAndGlyphs" style="font-family:Liberation Sans;font-weight:700;font-size:5.8px" fill="#8b5836">TEXAS</text>
<text x="87.0" y="58.0" text-anchor="middle" textLength="34" lengthAdjust="spacingAndGlyphs" style="font-family:Liberation Sans;font-weight:700;font-size:5.8px" fill="#8b5836">WASHINGTON</text>
<text x="92.0" y="129.0" text-anchor="middle" textLength="30" lengthAdjust="spacingAndGlyphs" style="font-family:Liberation Sans;font-weight:700;font-size:5.8px" fill="#8b5836">CALIFORNIA</text>
<text x="118.0" y="107.0" text-anchor="middle" textLength="20" lengthAdjust="spacingAndGlyphs" style="font-family:Liberation Sans;font-weight:700;font-size:5.8px" fill="#8b5836">NEVADA</text>
<text x="142.0" y="157.0" text-anchor="middle" textLength="22" lengthAdjust="spacingAndGlyphs" style="font-family:Liberation Sans;font-weight:700;font-size:5.8px" fill="#8b5836">ARIZONA</text>
<text x="212.6" y="124.4" text-anchor="middle" textLength="19.3" lengthAdjust="spacingAndGlyphs" style="font-family:Liberation Sans;font-size:6.5px" fill="#8c8c8c">United</text>
<text x="212.6" y="130.6" text-anchor="middle" textLength="18" lengthAdjust="spacingAndGlyphs" style="font-family:Liberation Sans;font-size:6.5px" fill="#8c8c8c">States</text>
<text x="194.7" y="217.3" text-anchor="middle" textLength="19.5" lengthAdjust="spacingAndGlyphs" style="font-family:Liberation Sans;font-size:6.5px" fill="#8c8c8c">México</text>
<text x="332.5" y="125.0" text-anchor="middle" textLength="27" lengthAdjust="spacingAndGlyphs" style="font-family:Liberation Sans;font-weight:700;font-size:6.3px" fill="#333">Washington</text>
<text x="341.5" y="67.1" text-anchor="middle" textLength="19.7" lengthAdjust="spacingAndGlyphs" style="font-family:Liberation Sans;font-weight:700;font-size:6.3px" fill="#333">Ottawa</text>
<text x="212.8" y="232.8" text-anchor="middle" textLength="18.3" lengthAdjust="spacingAndGlyphs" style="font-family:Liberation Sans;font-weight:700;font-size:6.3px" fill="#333">Ciudad</text>
<text x="212.4" y="239.2" text-anchor="middle" textLength="26.7" lengthAdjust="spacingAndGlyphs" style="font-family:Liberation Sans;font-weight:700;font-size:6.3px" fill="#333">de México</text>
<text x="288.2" y="222.1" text-anchor="middle" textLength="28.3" lengthAdjust="spacingAndGlyphs" style="font-family:Liberation Sans;font-weight:700;font-size:6.3px" fill="#333">La Habana</text>
<text x="332.6" y="212.0" text-anchor="middle" textLength="10" lengthAdjust="spacingAndGlyphs" style="font-family:Liberation Sans;font-size:6px" fill="#9a7a5a">The</text>
<text x="332.6" y="219.0" text-anchor="middle" textLength="21" lengthAdjust="spacingAndGlyphs" style="font-family:Liberation Sans;font-size:6px" fill="#9a7a5a">Bahamas</text>
<text x="317.2" y="231.3" text-anchor="middle" textLength="13.6" lengthAdjust="spacingAndGlyphs" style="font-family:Liberation Sans;font-size:6px" fill="#9a7a5a">Cuba</text>
<text x="372.8" y="241.0" text-anchor="middle" textLength="27.7" lengthAdjust="spacingAndGlyphs" style="font-family:Liberation Sans;font-size:6px" fill="#9a7a5a">Republica</text>
<text x="425.0" y="27.5" text-anchor="middle" textLength="12" lengthAdjust="spacingAndGlyphs" style="font-family:Liberation Sans;font-style:italic;font-size:5px" fill="#6f93c4">Golfe</text>
<text x="425.0" y="33.5" text-anchor="middle" textLength="16" lengthAdjust="spacingAndGlyphs" style="font-family:Liberation Sans;font-style:italic;font-size:5px" fill="#6f93c4">du Saint-</text>
<text x="425.0" y="39.5" text-anchor="middle" textLength="17" lengthAdjust="spacingAndGlyphs" style="font-family:Liberation Sans;font-style:italic;font-size:5px" fill="#6f93c4">Laurent /</text>
<text x="425.0" y="45.5" text-anchor="middle" textLength="14" lengthAdjust="spacingAndGlyphs" style="font-family:Liberation Sans;font-style:italic;font-size:5px" fill="#6f93c4">Gulf of</text>
<text x="425.0" y="51.5" text-anchor="middle" textLength="11" lengthAdjust="spacingAndGlyphs" style="font-family:Liberation Sans;font-style:italic;font-size:5px" fill="#6f93c4">Saint</text>
<text x="425.0" y="57.5" text-anchor="middle" textLength="17" lengthAdjust="spacingAndGlyphs" style="font-family:Liberation Sans;font-style:italic;font-size:5px" fill="#6f93c4">Lawrence</text>
<circle cx="341" cy="70.5" r="1.2" fill="none" stroke="#444" stroke-width="0.5"/>
<circle cx="305" cy="221" r="1.2" fill="none" stroke="#444" stroke-width="0.5"/>
<circle cx="84.40" cy="52.20" r="24.6" fill="#fdca45" fill-opacity="0.95" stroke="#cfa538" stroke-width="0.8" stroke-opacity="0.9"/>
<path d="M84.40,52.20 L83.97,27.60 A24.60,24.60 0 0 1 86.97,27.73 Z" fill="#f08a3c" stroke="#c47131" stroke-width="0.5"/>
<circle cx="84.60" cy="126.30" r="41.8" fill="#a27ff5" fill-opacity="0.95" stroke="#8468c8" stroke-width="0.8" stroke-opacity="0.9"/>
<circle cx="142.00" cy="156.00" r="20.7" fill="#fdca45" fill-opacity="0.95" stroke="#cfa538" stroke-width="0.8" stroke-opacity="0.9"/>
<circle cx="113.20" cy="160.40" r="16.0" fill="#42a4f5" fill-opacity="0.95" stroke="#3686c8" stroke-width="0.8" stroke-opacity="0.9"/>
<circle cx="275.30" cy="95.50" r="21.2" fill="#fdca45" fill-opacity="0.95" stroke="#cfa538" stroke-width="0.8" stroke-opacity="0.9"/>
<circle cx="273.60" cy="99.40" r="15.8" fill="#42a4f5" fill-opacity="0.95" stroke="#3686c8" stroke-width="0.8" stroke-opacity="0.9"/>
<circle cx="308.30" cy="99.60" r="14.8" fill="#fdca45" fill-opacity="0.95" stroke="#cfa538" stroke-width="0.8" stroke-opacity="0.9"/>
<path d="M308.30,99.60 L307.78,84.81 A14.80,14.80 0 0 1 309.07,84.82 Z" fill="#42a4f5" stroke="#3686c8" stroke-width="0.5"/>
<circle cx="293.40" cy="116.20" r="15.2" fill="#fdca45" fill-opacity="0.95" stroke="#cfa538" stroke-width="0.8" stroke-opacity="0.9"/>
<path d="M293.40,116.20 L292.34,101.04 A15.20,15.20 0 0 1 293.93,101.01 Z" fill="#42a4f5" stroke="#3686c8" stroke-width="0.5"/>
<circle cx="250.00" cy="149.80" r="24.6" fill="#fdca45" fill-opacity="0.95" stroke="#cfa538" stroke-width="0.8" stroke-opacity="0.9"/>
<circle cx="225.20" cy="159.00" r="20.2" fill="#fdca45" fill-opacity="0.95" stroke="#cfa538" stroke-width="0.8" stroke-opacity="0.9"/>
<path d="M225.20,159.00 L224.85,138.80 A20.20,20.20 0 0 1 227.31,138.91 Z" fill="#f08a3c" stroke="#c47131" stroke-width="0.5"/>
<circle cx="280.20" cy="155.20" r="16.0" fill="#42a4f5" fill-opacity="0.95" stroke="#3686c8" stroke-width="0.8" stroke-opacity="0.9"/>
<circle cx="232.70" cy="179.40" r="16.6" fill="#fdca45" fill-opacity="0.95" stroke="#cfa538" stroke-width="0.8" stroke-opacity="0.9"/>
<circle cx="222.00" cy="191.70" r="16.4" fill="#42a4f5" fill-opacity="0.95" stroke="#3686c8" stroke-width="0.8" stroke-opacity="0.9"/>
<circle cx="273.00" cy="172.00" r="16.9" fill="#42a4f5" fill-opacity="0.95" stroke="#3686c8" stroke-width="0.8" stroke-opacity="0.9"/>
<circle cx="262.20" cy="178.10" r="16.0" fill="#42a4f5" fill-opacity="0.95" stroke="#3686c8" stroke-width="0.8" stroke-opacity="0.9"/>
<path d="M262.20,178.10 L261.64,162.11 A16.00,16.00 0 1 1 261.36,194.08 Z" fill="#f08a3c" stroke="#c47131" stroke-width="0.5"/>
<circle cx="350.20" cy="104.90" r="17.0" fill="#fdca45" fill-opacity="0.95" stroke="#cfa538" stroke-width="0.8" stroke-opacity="0.9"/>
<path d="M350.20,104.90 L343.83,89.14 A17.00,17.00 0 0 1 345.80,88.48 Z" fill="#8e8e8e" stroke="#747474" stroke-width="0.5"/>
<circle cx="364.80" cy="88.60" r="15.2" fill="#42a4f5" fill-opacity="0.95" stroke="#3686c8" stroke-width="0.8" stroke-opacity="0.9"/>
<circle cx="344.50" cy="110.50" r="13.4" fill="#42a4f5" fill-opacity="0.95" stroke="#3686c8" stroke-width="0.8" stroke-opacity="0.9"/>
<text x="259.5" y="79.7" textLength="33.2" lengthAdjust="spacingAndGlyphs" style="font-family:Liberation Sans;font-size:10.4px" fill="#3a3a3a" fill-opacity="0.88" stroke="#3a3a3a" stroke-width="0.45" stroke-opacity="0.88">$733K</text>
<text x="292.8" y="85.9" textLength="32.9" lengthAdjust="spacingAndGlyphs" style="font-family:Liberation Sans;font-size:10.4px" fill="#3a3a3a" fill-opacity="0.88" stroke="#3a3a3a" stroke-width="0.45" stroke-opacity="0.88">$299K</text>
<text x="229.9" y="101.5" textLength="33.6" lengthAdjust="spacingAndGlyphs" style="font-family:Liberation Sans;font-size:10.4px" fill="#3a3a3a" fill-opacity="0.88" stroke="#3a3a3a" stroke-width="0.45" stroke-opacity="0.88">$364K</text>
<text x="234.0" y="127.7" textLength="33.7" lengthAdjust="spacingAndGlyphs" style="font-family:Liberation Sans;font-size:10.4px" fill="#3a3a3a" fill-opacity="0.88" stroke="#3a3a3a" stroke-width="0.45" stroke-opacity="0.88">$971K</text>
<text x="277.1" y="135.6" textLength="33.7" lengthAdjust="spacingAndGlyphs" style="font-family:Liberation Sans;font-size:10.4px" fill="#3a3a3a" fill-opacity="0.88" stroke="#3a3a3a" stroke-width="0.45" stroke-opacity="0.88">$353K</text>
<text x="264.3" y="141.0" textLength="33.3" lengthAdjust="spacingAndGlyphs" style="font-family:Liberation Sans;font-size:10.4px" fill="#3a3a3a" fill-opacity="0.88" stroke="#3a3a3a" stroke-width="0.45" stroke-opacity="0.88">$378K</text>
<text x="208.5" y="143.0" textLength="34" lengthAdjust="spacingAndGlyphs" style="font-family:Liberation Sans;font-size:10.4px" fill="#3a3a3a" fill-opacity="0.88" stroke="#3a3a3a" stroke-width="0.45" stroke-opacity="0.88">$621K</text>
<text x="284.1" y="176.4" textLength="33.6" lengthAdjust="spacingAndGlyphs" style="font-family:Liberation Sans;font-size:10.4px" fill="#3a3a3a" fill-opacity="0.88" stroke="#3a3a3a" stroke-width="0.45" stroke-opacity="0.88">$429K</text>
<text x="328.3" y="128.4" textLength="33.3" lengthAdjust="spacingAndGlyphs" style="font-family:Liberation Sans;font-size:10.4px" fill="#3a3a3a" fill-opacity="0.88" stroke="#3a3a3a" stroke-width="0.45" stroke-opacity="0.88">$212K</text>
<text x="125.6" y="138.4" textLength="33.4" lengthAdjust="spacingAndGlyphs" style="font-family:Liberation Sans;font-size:10.4px" fill="#3a3a3a" fill-opacity="0.88" stroke="#3a3a3a" stroke-width="0.45" stroke-opacity="0.88">$646K</text>
<text x="96.8" y="147.0" textLength="33.2" lengthAdjust="spacingAndGlyphs" style="font-family:Liberation Sans;font-size:10.4px" fill="#3a3a3a" fill-opacity="0.88" stroke="#3a3a3a" stroke-width="0.45" stroke-opacity="0.88">$359K</text>
<text x="449" y="239.8" text-anchor="end" textLength="117" lengthAdjust="spacingAndGlyphs" style="font-family:Liberation Sans;font-size:9.5px" fill="#9aa0a6" fill-opacity="0.8">Map data &#169; OpenStreetMap</text>
</g></svg>
<svg style="left:1115px;top:505px" width="110" height="60" viewBox="0 0 110 60">
<path d="M48 7.2 L95.3 7.2 L95.3 43.7 L46.5 43.7 Q38.5 25.5 48 7.2 Z" fill="#5e6a7d"/>
<circle cx="70.3" cy="30.7" r="12.6" fill="none" stroke="#fff" stroke-width="1"/>
<line x1="40.2" y1="16.4" x2="43.9" y2="16.4" stroke="#8a93a0" stroke-width="1"/>
<line x1="40.2" y1="34" x2="57.8" y2="34" stroke="#fff" stroke-width="2.6"/>
<line x1="40.2" y1="34" x2="57.8" y2="34" stroke="#8a93a0" stroke-width="1"/>
</svg>
<div class="t" style="left:1134.80px;top:515.20px;font-size:10.5px;font-weight:400;color:#78808c;letter-spacing:-0.319px;">$2M</div>
<div class="t" style="left:1125.70px;top:532.70px;font-size:10.5px;font-weight:400;color:#78808c;letter-spacing:-0.519px;">$147K</div>
<div class="t" style="left:1144.40px;top:552.76px;font-size:12.2px;font-weight:400;color:#4b4f56;letter-spacing:-0.419px;-webkit-text-stroke:0.35px #4b4f56;">Expenses</div>
<div class="t" style="left:1348.60px;top:512.96px;font-size:12.2px;font-weight:400;color:#4b4f56;letter-spacing:-0.231px;-webkit-text-stroke:0.35px #4b4f56;">Product Line</div>
<div class="r" style="left:1278.3px;top:530.6px;width:8.6px;height:8px;background:#45a6f5"></div>
<div class="t" style="left:1290.80px;top:528.73px;font-size:10.8px;font-weight:400;color:#6f7684;letter-spacing:-0.310px;">Action Figure</div>
<div class="r" style="left:1367px;top:530.6px;width:8.6px;height:8px;background:#fdd048"></div>
<div class="t" style="left:1379.50px;top:528.73px;font-size:10.8px;font-weight:400;color:#6f7684;letter-spacing:-1.035px;">Game</div>
<div class="r" style="left:1417px;top:530.6px;width:8.6px;height:8px;background:#a27ff5"></div>
<div class="t" style="left:1429.50px;top:528.73px;font-size:10.8px;font-weight:400;color:#6f7684;letter-spacing:-0.292px;">Promotional</div>
<div class="r" style="left:1278.3px;top:543.9px;width:8.6px;height:8px;background:#f5893e"></div>
<div class="t" style="left:1290.80px;top:542.03px;font-size:10.8px;font-weight:400;color:#6f7684;letter-spacing:-0.295px;">Stuffed Animal</div>
<div class="r" style="left:1367px;top:543.9px;width:8.6px;height:8px;background:#8e8e8e"></div>
<div class="t" style="left:1379.50px;top:542.03px;font-size:10.8px;font-weight:400;color:#6f7684;letter-spacing:-0.379px;">Other</div>
<svg style="left:1496px;top:569px" width="18" height="18" viewBox="0 0 18 18">
<circle cx="8.8" cy="8.3" r="6.2" fill="none" stroke="#2f86d4" stroke-width="1.2"/>
<rect x="8.1" y="7.0" width="1.4" height="4.2" fill="#2f86d4"/><circle cx="8.8" cy="5.3" r="0.85" fill="#2f86d4"/></svg>
</body></html>
